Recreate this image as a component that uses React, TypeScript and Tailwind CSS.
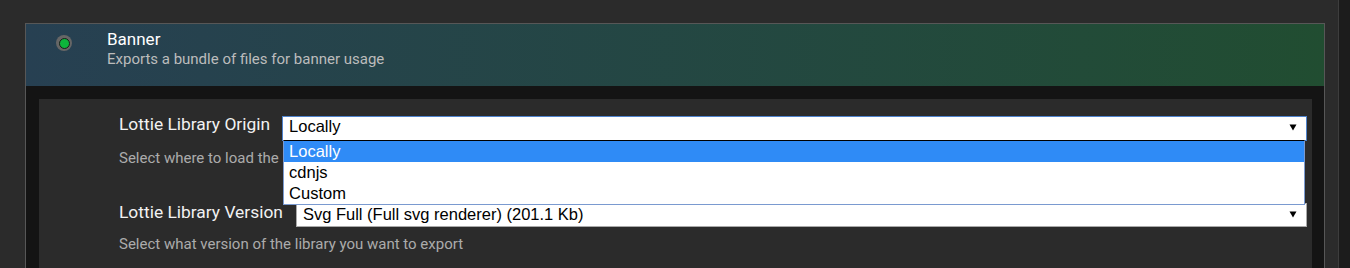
import React from 'react';

const Arrow = () => (
    <svg width="8" height="7" viewBox="0 0 8 7" className="shrink-0">
        <path d="M0.5 0.5 H7.5 L4 6.5 Z" fill="#000" />
    </svg>
);

const options = ['Locally', 'cdnjs', 'Custom'];

export default function App() {
    return (
        <div className="flex h-[268px] w-[1350px] overflow-hidden bg-[#2b2b2b] font-['Roboto',sans-serif]">
            {/* Main column */}
            <div className="flex-1 pl-[25px] pr-[13px] pt-[23px]">
                <div className="h-full border border-b-0 border-[#575757] bg-[#141414]">
                    {/* Banner header */}
                    <div className="flex h-[62px] items-start bg-gradient-to-r from-[#274052] to-[#214d31] pl-[30px] pt-[5px]">
                        <div className="mt-[6px] flex h-[16px] w-[16px] items-center justify-center rounded-full bg-[#666]">
                            <div className="h-[11px] w-[11px] rounded-full border border-[#1c1c1c] bg-[#0db53b]" />
                        </div>
                        <div className="ml-[35px]">
                            <div className="text-[17px] leading-[20px] text-white">Banner</div>
                            <div className="text-[15px] leading-[20px] text-[#bcbcbc]">Exports a bundle of files for banner usage</div>
                        </div>
                    </div>

                    {/* Settings body */}
                    <div className="h-full pl-[13px] pr-[12px] pt-[13px]">
                        <div className="h-full bg-[#2b2b2b] pl-[80px] pr-[5px] pt-[15px]">
                            {/* Origin row */}
                            <div className="flex items-start">
                                <div className="mr-[12px] text-[17.4px] leading-[21px] text-[#f2f2f2]">Lottie Library Origin</div>
                                <div className="relative mt-[2px] flex-1">
                                    <div className="flex h-[25px] items-start justify-between border border-[#4f83cc] bg-white pl-[6px] pr-[9px] font-['Liberation_Sans',Arial,sans-serif] text-[16.5px] leading-[18px] text-black">
                                        <span>Locally</span>
                                        <span className="mt-[7px]"><Arrow /></span>
                                    </div>
                                    {/* Open dropdown list */}
                                    <div className="absolute left-[1px] right-[2px] top-[24px] z-10 border border-t-black border-[#7a9ad0] bg-white font-['Liberation_Sans',Arial,sans-serif] text-[16.5px] leading-[21px]">
                                        {options.map((o, i) => (
                                            <div
                                                key={o}
                                                className={`h-[21px] pl-[5px] ${i === 0 ? 'bg-[#2f8bf6] text-white' : 'text-black'}`}
                                            >
                                                {o}
                                            </div>
                                        ))}
                                    </div>
                                </div>
                            </div>
                            <div className="mt-[7px] text-[15px] leading-[20px] text-[#ababab]">Select where to load the library from</div>

                            {/* Version row */}
                            <div className="mt-[34px] flex items-start">
                                <div className="mr-[13px] text-[17.4px] leading-[21px] text-[#f2f2f2]">Lottie Library Version</div>
                                <div className="mt-[1px] flex h-[24px] flex-1 items-start justify-between border border-[#a9a9a9] bg-white pl-[6px] pr-[9px] pt-[1px] font-['Liberation_Sans',Arial,sans-serif] text-[16.5px] leading-[18px] text-black">
                                    <span>Svg Full (Full svg renderer) (201.1 Kb)</span>
                                    <span className="mt-[6px]"><Arrow /></span>
                                </div>
                            </div>
                            <div className="mt-[7px] text-[15px] leading-[20px] text-[#ababab]">Select what version of the library you want to export</div>
                        </div>
                    </div>
                </div>
            </div>

            {/* Scrollbar strip */}
            <div className="w-[12px] border-l border-[#3d3d3d] bg-[#1c1c1c]" />
        </div>
    );
}
